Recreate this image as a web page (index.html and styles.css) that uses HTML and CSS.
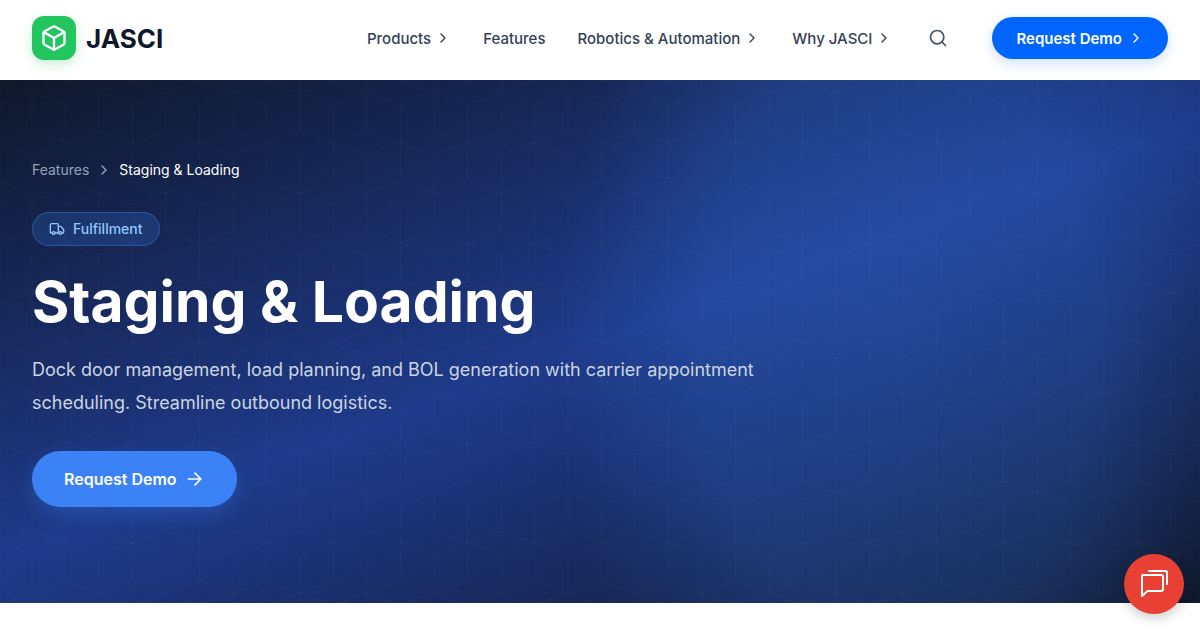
FILE: index.html
```html
<!DOCTYPE html>
<html lang="en">
<head>
  <meta charset="utf-8">
  <meta name="viewport" content="width=device-width, initial-scale=1">
  <title>Staging &amp; Loading | JASCI</title>
  <link rel="stylesheet" href="styles.css">
</head>
<body>
  <header class="header">
    <a class="logo" href="#">
      <span class="logo-mark">
        <svg width="28" height="28" viewBox="0 0 24 24" fill="none" stroke="currentColor" stroke-width="2" stroke-linecap="round" stroke-linejoin="round">
          <path d="M21 16V8a2 2 0 0 0-1-1.730l-7-4a2 2 0 0 0-2 0l-7 4A2 2 0 0 0 3 8v8a2 2 0 0 0 1 1.730l7 4a2 2 0 0 0 2 0l7-4A2 2 0 0 0 21 16z"/>
          <path d="M3.270 6.960L12 12.010l8.730-5.050M12 22.080V12"/>
        </svg>
      </span>
      <span class="logo-text">JASCI</span>
    </a>
    <nav class="nav">
      <a class="nav-link" href="#">Products
        <svg class="chevron" viewBox="0 0 24 24"><path d="M9 18l6-6-6-6"/></svg>
      </a>
      <a class="nav-link" href="#">Features</a>
      <a class="nav-link" href="#">Robotics &amp; Automation
        <svg class="chevron" viewBox="0 0 24 24"><path d="M9 18l6-6-6-6"/></svg>
      </a>
      <a class="nav-link" href="#">Why JASCI
        <svg class="chevron" viewBox="0 0 24 24"><path d="M9 18l6-6-6-6"/></svg>
      </a>
    </nav>
    <div class="header-actions">
      <button type="button" class="search-btn" aria-label="Search">
        <svg width="20" height="20" viewBox="0 0 24 24" fill="none" stroke="currentColor" stroke-width="2" stroke-linecap="round" stroke-linejoin="round">
          <circle cx="11" cy="11" r="8"/>
          <path d="M21 21l-4.300-4.300"/>
        </svg>
      </button>
      <a class="btn btn-header" href="#">Request Demo
        <svg class="chevron" viewBox="0 0 24 24"><path d="M9 18l6-6-6-6"/></svg>
      </a>
    </div>
  </header>

  <main>
    <section class="hero">
      <svg class="hero-pattern" aria-hidden="true">
        <defs>
          <pattern id="cubes" x="32" y="13" width="67" height="100" patternUnits="userSpaceOnUse">
            <path d="M0 0l33.500 12L67 0M0 100l33.500-12L67 100M0 38l33.500 12L67 38M0 62l33.500-12L67 62M33.500 12v76M0 0v38M67 0v38M0 62v38M67 62v38"/>
          </pattern>
        </defs>
        <rect width="100%" height="100%" fill="url(#cubes)"/>
      </svg>
      <div class="hero-content">
        <nav class="breadcrumb" aria-label="Breadcrumb">
          <a href="#">Features</a>
          <svg class="chevron" viewBox="0 0 24 24"><path d="M9 18l6-6-6-6"/></svg>
          <span>Staging &amp; Loading</span>
        </nav>
        <div class="badge">
          <svg width="16" height="16" viewBox="0 0 24 24" fill="none" stroke="currentColor" stroke-width="2" stroke-linecap="round" stroke-linejoin="round">
            <path d="M14 18V6a2 2 0 0 0-2-2H4a2 2 0 0 0-2 2v11a1 1 0 0 0 1 1h2"/>
            <path d="M15 18H9"/>
            <path d="M19 18h2a1 1 0 0 0 1-1v-3.650a1 1 0 0 0-.22-.624l-3.480-4.350A1 1 0 0 0 17.520 8H14"/>
            <circle cx="17" cy="18" r="2"/>
            <circle cx="7" cy="18" r="2"/>
          </svg>
          Fulfillment
        </div>
        <h1>Staging &amp; Loading</h1>
        <p class="lead">Dock door management, load planning, and BOL generation with carrier appointment scheduling. Streamline outbound logistics.</p>
        <a class="btn btn-hero" href="#">Request Demo
          <svg width="20" height="20" viewBox="0 0 24 24" fill="none" stroke="currentColor" stroke-width="2" stroke-linecap="round" stroke-linejoin="round">
            <path d="M4 12h15M12 5l7 7-7 7"/>
          </svg>
        </a>
      </div>
    </section>
  </main>

  <button type="button" class="chat-btn" aria-label="Open chat">
    <svg width="32" height="32" viewBox="0 0 32 32" fill="none" stroke="currentColor" stroke-width="2" stroke-linecap="round" stroke-linejoin="round">
      <path d="M5 7h18a2 2 0 0 1 2 2v12a2 2 0 0 1-2 2H9.500L4 28V8a1 1 0 0 1 1-1z"/>
      <path d="M11 3h16.500a1.500 1.500 0 0 1 1.500 1.500V16"/>
    </svg>
  </button>
</body>
</html>
```

FILE: styles.css
```css
* {
  box-sizing: border-box;
}

body {
  margin: 0;
  font-family: Inter, sans-serif;
  color: #0f172a;
  background: #fff;
  -webkit-font-smoothing: antialiased;
}

a {
  color: inherit;
  text-decoration: none;
}

.header {
  display: flex;
  align-items: center;
  height: 80px;
  padding: 0 32px 4px;
  background: #fff;
}

.logo {
  display: flex;
  align-items: center;
  gap: 10px;
  margin-right: auto;
}

.logo-mark {
  display: flex;
  align-items: center;
  justify-content: center;
  width: 44px;
  height: 44px;
  border-radius: 12px;
  color: #fff;
  background: #22c55e;
  box-shadow: 0 4px 12px rgba(34, 197, 94, 0.25);
}

.logo-text {
  font-size: 26px;
  font-weight: 700;
}

.nav {
  display: flex;
  gap: 32px;
  margin-right: 24px;
}

.nav-link {
  display: flex;
  align-items: center;
  gap: 4px;
  font-size: 15px;
  font-weight: 500;
  color: #334155;
}

.chevron {
  width: 16px;
  height: 16px;
  fill: none;
  stroke: currentColor;
  stroke-width: 2;
  stroke-linecap: round;
  stroke-linejoin: round;
}

.header-actions {
  display: flex;
  align-items: center;
  gap: 32px;
}

.search-btn {
  display: flex;
  align-items: center;
  justify-content: center;
  width: 44px;
  height: 44px;
  padding: 0;
  border: none;
  color: #475569;
  background: none;
  cursor: pointer;
}

.btn {
  display: inline-flex;
  align-items: center;
  gap: 8px;
  border-radius: 100px;
  font-weight: 600;
  color: #fff;
}

.btn-header {
  gap: 6px;
  height: 42px;
  padding: 0 24px;
  font-size: 15px;
  background: #0066ff;
  box-shadow: 0 4px 14px rgba(0, 102, 255, 0.2);
}

.hero {
  position: relative;
  overflow: hidden;
  padding: 80px 32px 96px;
  background: linear-gradient(160deg, #0f172a 0%, #1e3a8a 50%, #0f172a 100%);
}

/* soft blue glow on the right half */
.hero::before {
  content: "";
  position: absolute;
  top: -50%;
  right: -4%;
  width: 58%;
  height: 200%;
  background: radial-gradient(ellipse, rgba(59, 130, 246, 0.24) 0%, rgba(59, 130, 246, 0.2) 40%, transparent 70%);
}

.hero-pattern {
  position: absolute;
  inset: 0;
  width: 100%;
  height: 100%;
  fill: none;
  stroke: rgba(255, 255, 255, 0.025);
}

.hero-content {
  position: relative;
  max-width: 800px;
}

.breadcrumb {
  display: flex;
  align-items: center;
  gap: 7px;
  margin-bottom: 32px;
  font-size: 14px;
  line-height: 20px;
  color: #fff;
}

.breadcrumb a,
.breadcrumb .chevron {
  color: #94a3b8;
}

.badge {
  display: flex;
  align-items: center;
  gap: 8px;
  width: fit-content;
  height: 34px;
  padding: 0 16px;
  border: 1px solid rgba(59, 130, 246, 0.4);
  border-radius: 100px;
  font-size: 14px;
  line-height: 20px;
  font-weight: 500;
  color: #93c5fd;
  background: rgba(59, 130, 246, 0.2);
}

h1 {
  margin: 24px 0 20px;
  font-size: 57px;
  line-height: 63px;
  font-weight: 700;
  color: #fff;
}

.lead {
  margin: 0 0 32px;
  font-size: 18px;
  line-height: 33px;
  color: #cbd5e1;
}

.btn-hero {
  height: 56px;
  padding: 0 32px;
  font-size: 16px;
  background: #3b82f6;
  box-shadow: 0 8px 20px rgba(59, 130, 246, 0.3);
}

.chat-btn {
  position: fixed;
  right: 16px;
  bottom: 16px;
  display: flex;
  align-items: center;
  justify-content: center;
  width: 60px;
  height: 60px;
  padding: 0;
  border: none;
  border-radius: 50%;
  color: #fff;
  background: #e84133;
  box-shadow: 0 4px 12px rgba(0, 0, 0, 0.2);
  cursor: pointer;
}
```
